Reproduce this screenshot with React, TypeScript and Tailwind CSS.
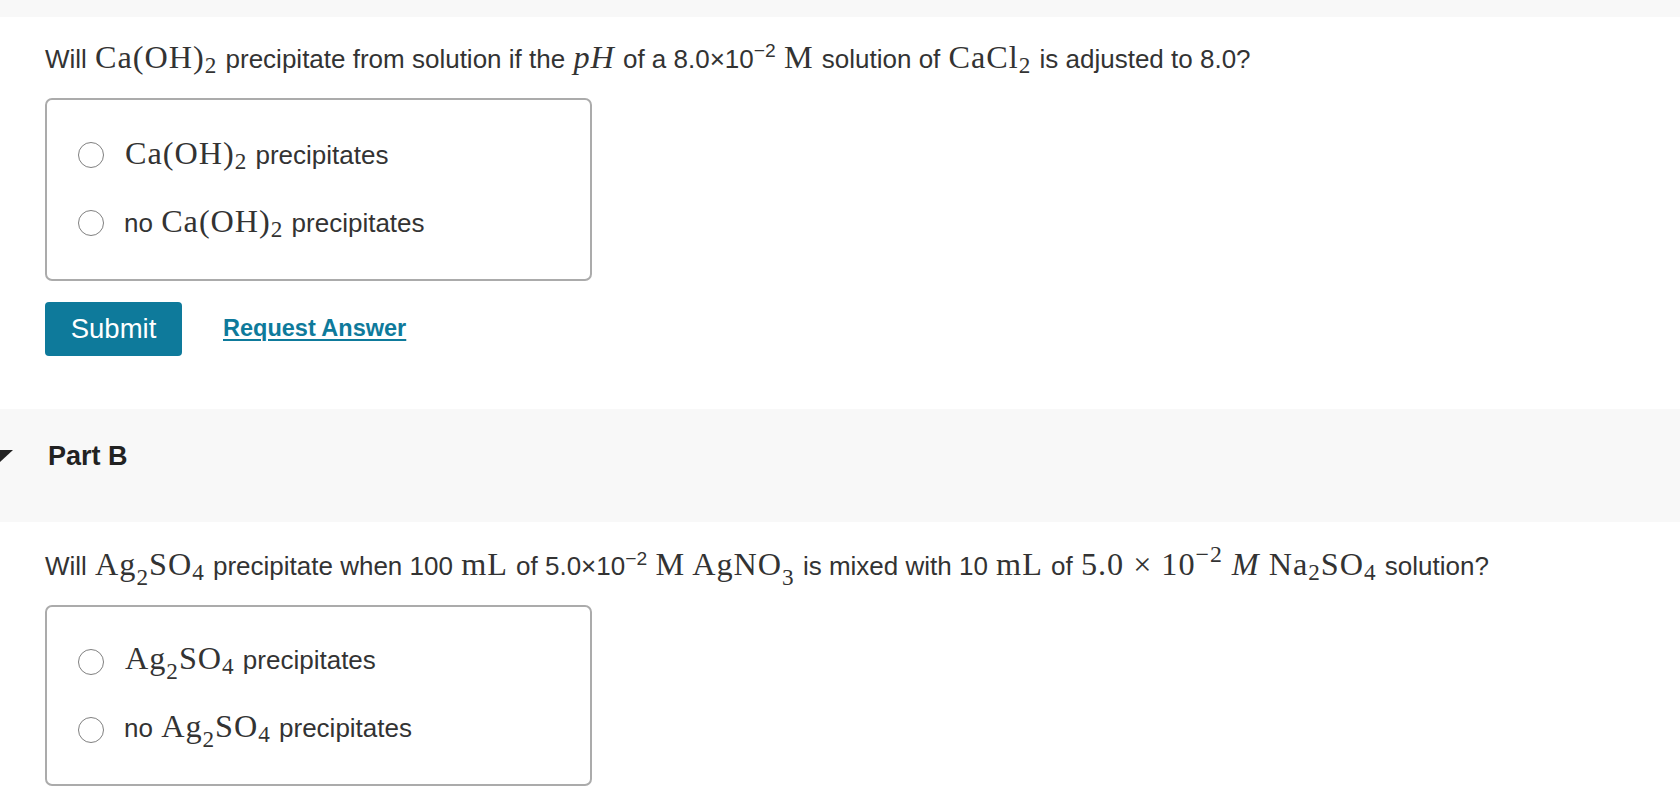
import React from 'react';

// --- small math helpers (MathJax-like serif rendering) ---
const MathText: React.FC<{ children: React.ReactNode; italic?: boolean }> = ({ children, italic }) => (
  <span
    className={`font-['Liberation_Serif',serif] text-[1.24em] leading-none tracking-[0.03em] mx-[1px] ${italic ? 'italic' : ''}`}
  >
    {children}
  </span>
);

const Sub: React.FC<{ children: React.ReactNode; low?: boolean }> = ({ children, low }) => (
  <span className={`text-[0.72em] leading-none ${low ? 'align-[-0.42em]' : 'align-[-0.2em]'}`}>{children}</span>
);

const Sup: React.FC<{ children: React.ReactNode }> = ({ children }) => (
  <span className="text-[0.74em] leading-none align-[0.55em]">{children}</span>
);

const Radio: React.FC = () => (
  <span className="inline-block w-[26px] h-[26px] rounded-full border-[1.5px] border-[#808080] bg-white shrink-0" />
);

const Option: React.FC<{ children: React.ReactNode }> = ({ children }) => (
  <label className="flex items-center h-[68px] pl-[31px] gap-[20px] cursor-pointer">
    <Radio />
    <span className="leading-[36px] whitespace-nowrap">{children}</span>
  </label>
);

const ChoiceBox: React.FC<{ children: React.ReactNode; className?: string }> = ({ children, className }) => (
  <div className={`w-[547px] border-2 border-[#ababab] rounded-[7px] pt-[21px] pb-[22px] ${className ?? ''}`}>
    {children}
  </div>
);

const CaOH2 = () => (
  <MathText>
    Ca(OH)<Sub>2</Sub>
  </MathText>
);

const Ag2SO4 = () => (
  <MathText>
    Ag<Sub low>2</Sub>SO<Sub>4</Sub>
  </MathText>
);

const App: React.FC = () => {
  return (
    <div className="w-[1680px] h-[796px] overflow-hidden bg-white text-[#333333] font-['Liberation_Sans',Arial,sans-serif] text-[26px]">
      <div className="h-[17px] bg-[#f8f8f8]" />

      {/* Part A question */}
      <div className="pl-[45px]">
        <p className="mt-[24px] mb-[21px] leading-[36px] whitespace-nowrap">
          Will <CaOH2 /> precipitate from solution if the <MathText italic>pH</MathText> of a 8.0×10
          <Sup>−2</Sup> <MathText>M</MathText> solution of{' '}
          <MathText>
            CaCl<Sub>2</Sub>
          </MathText>{' '}
          is adjusted to 8.0?
        </p>

        <ChoiceBox className="h-[183px]">
          <Option>
            <CaOH2 /> precipitates
          </Option>
          <Option>
            no <CaOH2 /> precipitates
          </Option>
        </ChoiceBox>

        <div className="flex items-center mt-[21px] gap-[41px]">
          <button className="w-[137px] h-[54px] rounded-[4px] bg-[#0e7a9b] text-white text-[27.5px]">Submit</button>
          <a href="#" className="font-bold text-[#0e7a9b] underline decoration-2 underline-offset-[3px] text-[23.5px]">
            Request Answer
          </a>
        </div>
      </div>

      {/* Part B header */}
      <div className="mt-[53px] h-[113px] bg-[#f8f8f8] flex items-start pt-[29px]">
        <svg width="13" height="36" viewBox="0 0 13 36" className="shrink-0">
          <polygon points="0,12 13,12 0,24" fill="#222" />
        </svg>
        <span className="ml-[35px] font-bold text-[27px] leading-[36px] text-[#222]">Part B</span>
      </div>

      {/* Part B question */}
      <div className="pl-[45px]">
        <p className="mt-[21px] mb-[16px] leading-[36px] whitespace-nowrap">
          Will <Ag2SO4 /> precipitate when 100 <MathText>mL</MathText> of 5.0×10<Sup>−2</Sup>{' '}
          <MathText>
            M AgNO<Sub low>3</Sub>
          </MathText>{' '}
          is mixed with 10 <MathText>mL</MathText> of{' '}
          <MathText>
            5.0 × 10<Sup>−2</Sup> <span className="italic">M</span> Na<Sub>2</Sub>SO<Sub>4</Sub>
          </MathText>{' '}
          solution?
        </p>

        <ChoiceBox className="h-[181px]">
          <Option>
            <Ag2SO4 /> precipitates
          </Option>
          <Option>
            no <Ag2SO4 /> precipitates
          </Option>
        </ChoiceBox>
      </div>
    </div>
  );
};

export default App;
